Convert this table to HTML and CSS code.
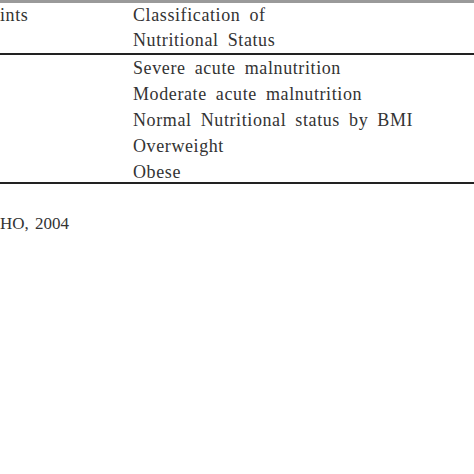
FILE: index.html
```html
<!DOCTYPE html>
<html>
<head>
<meta charset="utf-8">
<link rel="stylesheet" href="styles.css">
</head>
<body>
<div class="topbar"></div>
<div class="table">
  <div class="head">
    <div class="col1"><div class="line">ints</div></div>
    <div class="col2">
      <div class="line">Classification of</div>
      <div class="line">Nutritional Status</div>
    </div>
  </div>
  <div class="body">
    <div class="col1"></div>
    <div class="col2">
      <div class="line">Severe acute malnutrition</div>
      <div class="line">Moderate acute malnutrition</div>
      <div class="line">Normal Nutritional status by BMI</div>
      <div class="line">Overweight</div>
      <div class="line">Obese</div>
    </div>
  </div>
</div>
<div class="source">HO, 2004</div>
</body>
</html>
```
FILE: styles.css
```css
html, body {
  margin: 0;
  padding: 0;
  background: #fff;
}
body {
  font-family: "Liberation Serif", "DejaVu Serif", serif;
  font-size: 18px;
  color: #333;
  letter-spacing: 0.6px;
  word-spacing: 4px;
}
.topbar {
  height: 3px;
  background: #9a9a9a;
}
.head, .body {
  display: flex;
  border-bottom: 2px solid #222;
}
.col1 {
  width: 133px;
  flex: none;
}
.col2 {
  flex: 1;
}
.head .line {
  height: 25px;
  line-height: 25px;
}
.line {
  height: 26px;
  line-height: 26px;
}
.body .line:last-child {
  height: 23px;
}
.source {
  margin-top: 27px;
  font-size: 17px;
  letter-spacing: 0;
  word-spacing: 2px;
  line-height: 26px;
}
```
